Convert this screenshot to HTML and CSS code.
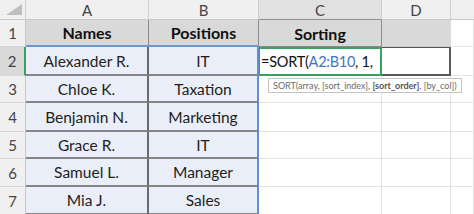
FILE: index.html
```html
<!DOCTYPE html>
<html>
    <head>
        <title>Sorting</title>
        <meta charset="UTF-8">
        <link rel="stylesheet" href="styles.css">
    </head>
    <body>
        <div class="sheet">
            <div class="cell corner">
                <svg width="18" height="12" viewBox="0 0 18 12"><polygon points="1,11 17,11 17,0" fill="#bfbfbf"/></svg>
            </div>
            <div class="cell colhead">A</div>
            <div class="cell colhead">B</div>
            <div class="cell colhead active">C</div>
            <div class="cell colhead">D</div>
            <div class="cell colhead last"></div>

            <div class="cell rowhead">1</div>
            <div class="cell title colA">Names</div>
            <div class="cell title colB">Positions</div>
            <div class="cell title colC">Sorting</div>
            <div class="cell title colD"></div>
            <div class="cell grid"></div>

            <div class="cell rowhead active">2</div>
            <div class="cell data colA">Alexander R.</div>
            <div class="cell data colB">IT</div>
            <div class="cell editing">=SORT(<span class="ref">A2:B10</span>, 1,</div>
            <div class="cell overflow"></div>
            <div class="cell grid"></div>

            <div class="cell rowhead">3</div>
            <div class="cell data colA">Chloe K.</div>
            <div class="cell data colB">Taxation</div>
            <div class="cell grid"></div>
            <div class="cell grid"></div>
            <div class="cell grid"></div>

            <div class="cell rowhead">4</div>
            <div class="cell data colA">Benjamin N.</div>
            <div class="cell data colB">Marketing</div>
            <div class="cell grid"></div>
            <div class="cell grid"></div>
            <div class="cell grid"></div>

            <div class="cell rowhead">5</div>
            <div class="cell data colA">Grace R.</div>
            <div class="cell data colB">IT</div>
            <div class="cell grid"></div>
            <div class="cell grid"></div>
            <div class="cell grid"></div>

            <div class="cell rowhead">6</div>
            <div class="cell data colA">Samuel L.</div>
            <div class="cell data colB">Manager</div>
            <div class="cell grid"></div>
            <div class="cell grid"></div>
            <div class="cell grid"></div>

            <div class="cell rowhead">7</div>
            <div class="cell data colA">Mia J.</div>
            <div class="cell data colB">Sales</div>
            <div class="cell grid"></div>
            <div class="cell grid"></div>
            <div class="cell grid"></div>

            <div class="tip">SORT(array, [sort_index], <b>[sort_order]</b>, [by_col])</div>
        </div>
    </body>
</html>
```

FILE: styles.css
```css
body {
    margin: 0;
    background: #fff;
    font-family: Lato, "Open Sans", sans-serif;
    overflow: hidden;
}

.sheet {
    position: relative;
    display: grid;
    grid-template-columns: 26px 123px 110px 123px 69px 23px;
    grid-template-rows: 20px 27px 29px 27px 29px 27px 28px 28px;
    width: 474px;
}

.cell {
    box-sizing: border-box;
    display: flex;
    align-items: center;
    justify-content: center;
    border-right: 1px solid #e2e2e2;
    border-bottom: 1px solid #e2e2e2;
    font-size: 15.5px;
    color: #1e1e1e;
    white-space: nowrap;
}

/* headers */
.corner {
    background: #f0f0f0;
    border-right: 1px solid #d0d0d0;
    border-bottom: 1px solid #c8c8c8;
    align-items: flex-end;
    justify-content: flex-end;
    padding: 0 2px 3px 0;
}
.colhead {
    background: #f0f0f0;
    color: #444;
    font-size: 15px;
    border-right: 1px solid #d0d0d0;
    border-bottom: 1px solid #c8c8c8;
}
.colhead.active {
    background: #e1e1e1;
    border-bottom: 1px solid #8f8f8f;
}
.colhead.last {
    border-right: none;
}
.rowhead {
    background: #f0f0f0;
    color: #444;
    font-size: 15px;
    border-right: 1px solid #b9c9e2;
    border-bottom: 1px solid #d6d6d6;
}
.rowhead.active {
    background: #dadada;
    border-right: 2px solid #3aa062;
}

/* table */
.title {
    background: #d9d9d9;
    font-weight: 700;
    font-size: 16px;
    color: #111;
    border-right: 1px solid #8a8a8a;
    border-bottom: 1px solid #8a8a8a;
}
.title.colA, .title.colB {
    border-bottom: 2px solid #6f96cf;
}
.title.colD {
    border-right: 1px solid #dcdcdc;
    border-bottom: 1px solid #cfcfcf;
}
.data {
    background: #e9eef8;
    border-bottom: 2px solid #858585;
}
.data.colA {
    border-right: 2px solid #6a6a6a;
}
.data.colB {
    border-right: 2px solid #5f8fd4;
}

/* editing */
.editing {
    justify-content: flex-start;
    padding-left: 1px;
    border: 2px solid #37a35f;
    border-left-width: 1px;
    font-size: 14.5px;
    letter-spacing: -0.25px;
    color: #111;
}
.ref {
    color: #3f73c4;
}
.overflow {
    border-top: 1px solid #555;
    border-right: 2px solid #5a5a5a;
    border-bottom: 2px solid #5a5a5a;
}
.grid {
    border-color: #e4e4e4;
}

.tip {
    position: absolute;
    left: 268px;
    top: 78px;
    height: 13px;
    padding: 0 4px 0 4px;
    border: 1px solid #c4c4c4;
    background: #fff;
    color: #6a6a6a;
    font-size: 9px;
    line-height: 13px;
    white-space: nowrap;
}
.tip b {
    color: #555;
}
```
